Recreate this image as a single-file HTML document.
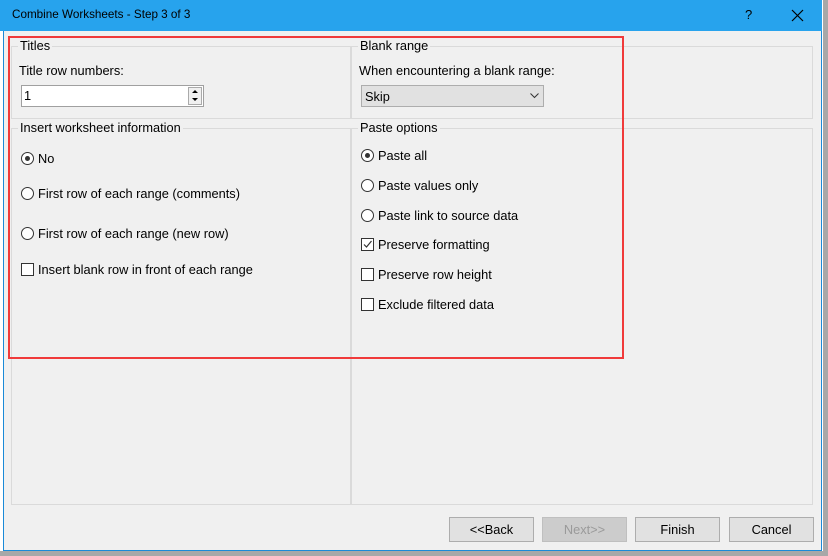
<!DOCTYPE html>
<html><head><style>
*{margin:0;padding:0;box-sizing:border-box}
body{width:828px;height:556px;position:relative;overflow:hidden;background:#fff;font-family:"Liberation Sans",sans-serif;font-size:12.8px;color:#000}
.a{position:absolute}
.win{left:3px;top:0;width:819px;height:551px;background:#f0f0f0;border:1px solid #1a8ad8;border-top:none}
.tb{left:0;top:0;width:822px;height:31px;background:#27a3ed}
.grp{border:1px solid #dadada}
.lbl{background:#f0f0f0;padding:0 2px;line-height:14px}
.rd{width:13px;height:13px;border:1px solid #333;border-radius:50%;background:#fff}
.rd.on::after{content:"";position:absolute;left:3px;top:3px;width:5px;height:5px;border-radius:50%;background:#333}
.cb{width:13px;height:13px;border:1px solid #333;background:#fff}
.btn{height:25px;width:85px;border:1px solid #adadad;background:#e1e1e1;text-align:center;line-height:23px}
</style></head><body>
<div class="a" style="left:823px;top:0;width:5px;height:556px;background:#a8a8a8"></div>
<div class="a" style="left:0;top:551px;width:828px;height:5px;background:#a8a8a8"></div>
<div class="a win"></div>
<div class="a tb"></div>
<div class="a" style="left:12px;top:8px;font-size:11.7px">Combine Worksheets - Step 3 of 3</div>
<div class="a" style="left:745px;top:7px;font-size:13px">?</div>
<svg class="a" style="left:791px;top:9px" width="13" height="13"><path d="M1 1L12 12M12 1L1 12" stroke="#000" stroke-width="1.2"/></svg>

<div class="a grp" style="left:11px;top:46px;width:340px;height:73px"></div>
<div class="a grp" style="left:351px;top:46px;width:462px;height:73px"></div>
<div class="a grp" style="left:11px;top:128px;width:340px;height:377px"></div>
<div class="a grp" style="left:351px;top:128px;width:462px;height:377px"></div>
<div class="a lbl" style="left:18px;top:39px">Titles</div>
<div class="a lbl" style="left:358px;top:39px">Blank range</div>
<div class="a lbl" style="left:18px;top:121px">Insert worksheet information</div>
<div class="a lbl" style="left:358px;top:121px">Paste options</div>

<div class="a" style="left:19px;top:63px">Title row numbers:</div>
<div class="a" style="left:21px;top:85px;width:183px;height:22px;border:1px solid #a0a0a0;background:#fff"></div>
<div class="a" style="left:24px;top:88px">1</div>
<div class="a" style="left:188px;top:87px;width:14px;height:18px;border:1px solid #aaa;background:#f0f0f0"></div>
<svg class="a" style="left:191px;top:89px" width="8" height="14"><path d="M1 4L4 1L7 4ZM1 9L4 12L7 9Z" fill="#000"/></svg>

<div class="a" style="left:359px;top:63px">When encountering a blank range:</div>
<div class="a" style="left:361px;top:85px;width:183px;height:22px;border:1px solid #adadad;background:#e1e1e1"></div>
<div class="a" style="left:365px;top:89px">Skip</div>
<svg class="a" style="left:530px;top:93px" width="9" height="6"><path d="M0.5 0.5L4.5 4.5L8.5 0.5" stroke="#333" fill="none"/></svg>

<div class="a rd on" style="left:21px;top:152px"></div><div class="a" style="left:38px;top:151px">No</div>
<div class="a rd" style="left:21px;top:187px"></div><div class="a" style="left:38px;top:186px">First row of each range (comments)</div>
<div class="a rd" style="left:21px;top:227px"></div><div class="a" style="left:38px;top:226px">First row of each range (new row)</div>
<div class="a cb" style="left:21px;top:263px"></div><div class="a" style="left:38px;top:262px">Insert blank row in front of each range</div>

<div class="a rd on" style="left:361px;top:149px"></div><div class="a" style="left:378px;top:148px">Paste all</div>
<div class="a rd" style="left:361px;top:179px"></div><div class="a" style="left:378px;top:178px">Paste values only</div>
<div class="a rd" style="left:361px;top:209px"></div><div class="a" style="left:378px;top:208px">Paste link to source data</div>
<div class="a cb" style="left:361px;top:238px"></div><svg class="a" style="left:362px;top:239px" width="11" height="11"><path d="M2 5.5L4.5 8L9.5 2" stroke="#333" stroke-width="1.2" fill="none"/></svg><div class="a" style="left:378px;top:237px">Preserve formatting</div>
<div class="a cb" style="left:361px;top:268px"></div><div class="a" style="left:378px;top:267px">Preserve row height</div>
<div class="a cb" style="left:361px;top:298px"></div><div class="a" style="left:378px;top:297px">Exclude filtered data</div>

<div class="a" style="left:8px;top:36px;width:616px;height:323px;border:2px solid #f03a3a"></div>

<div class="a btn" style="left:449px;top:517px">&lt;&lt;Back</div>
<div class="a btn" style="left:542px;top:517px;background:#cccccc;border-color:#bfbfbf;color:#9a9a9a">Next&gt;&gt;</div>
<div class="a btn" style="left:635px;top:517px">Finish</div>
<div class="a btn" style="left:729px;top:517px">Cancel</div>
</body></html>
